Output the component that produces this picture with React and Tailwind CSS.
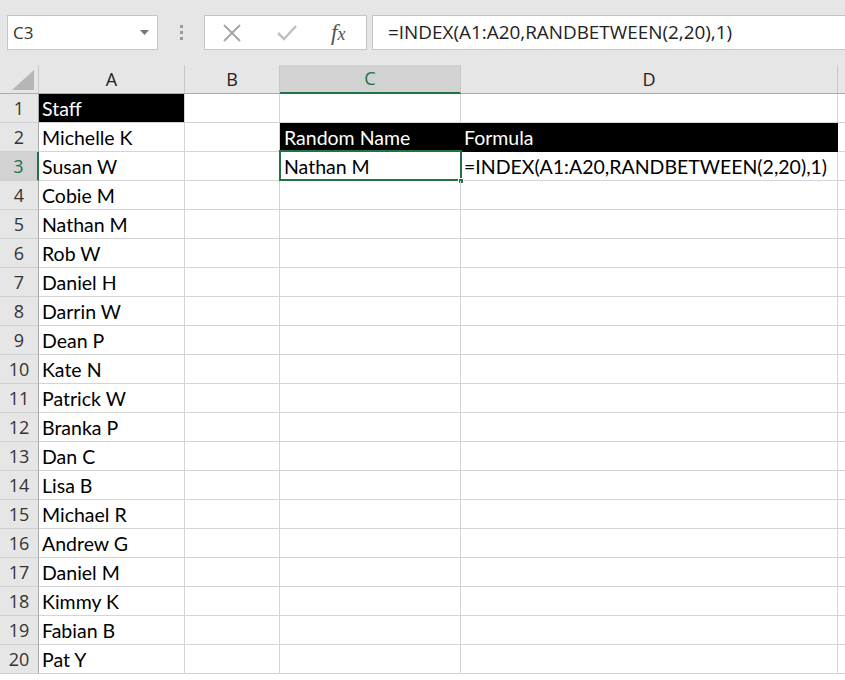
import React from "react";

const staff = [
  "Staff","Michelle K","Susan W","Cobie M","Nathan M","Rob W","Daniel H","Darrin W","Dean P","Kate N",
  "Patrick W","Branka P","Dan C","Lisa B","Michael R","Andrew G","Daniel M","Kimmy K","Fabian B","Pat Y",
];

const cellFont = { fontFamily: "Lato, 'Open Sans', sans-serif" };

function Row({ n }) {
  const name = staff[n - 1];
  const sel = n === 3;
  return (
    <div className="flex h-[29px]">
      <div
        className={
          "w-[39px] shrink-0 flex items-center justify-center text-[18px] border-b border-[#d0d0d0] " +
          (sel
            ? "bg-[#d2d2d2] text-[#217346] border-r-2 border-r-[#217346]"
            : "bg-[#e6e6e6] text-[#333] border-r border-r-[#a9a9a9]")
        }
        style={{ fontFamily: "'Open Sans', 'Noto Sans', sans-serif" }}
      >
        {n}
      </div>
      <div
        className={
          "w-[146px] shrink-0 border-r border-b border-[#d4d4d4] flex items-center pl-[3px] pt-[2px] text-[19.5px] " +
          (n === 1 ? "bg-black text-white" : "text-black")
        }
        style={cellFont}
      >
        {name}
      </div>
      <div className="w-[95px] shrink-0 border-r border-b border-[#d4d4d4]" />
      <div
        className={
          "w-[181px] shrink-0 border-r border-b border-[#d4d4d4] flex items-center pl-[4px] pt-[2px] text-[19.5px] relative " +
          (n === 2 ? "bg-black text-white border-black" : "text-black")
        }
        style={cellFont}
      >
        {n === 2 ? "Random Name" : n === 3 ? "Nathan M" : ""}
        {sel && (
          <>
            <div className="absolute left-[-1px] top-[-2px] w-[183px] h-[31px] border-2 border-[#217346] pointer-events-none" />
            <div className="absolute right-[-4px] bottom-[-4px] w-[6px] h-[6px] bg-[#217346] border border-white" />
          </>
        )}
      </div>
      <div
        className={
          "w-[377px] shrink-0 border-r border-b border-[#d4d4d4] flex items-center pl-[3px] pt-[2px] text-[19.5px] whitespace-nowrap " +
          (n === 2 ? "bg-black text-white border-black" : "text-black")
        }
        style={cellFont}
      >
        {n === 2 ? "Formula" : n === 3 ? "=INDEX(A1:A20,RANDBETWEEN(2,20),1)" : ""}
      </div>
      <div className="flex-1 border-b border-[#d4d4d4]" />
    </div>
  );
}

export default function App() {
  const rows = Array.from({ length: 20 }, (_, i) => i + 1);
  return (
    <div className="w-[845px] h-[680px] overflow-hidden bg-white">
      {/* Formula bar area */}
      <div className="h-[65px] bg-[#e6e6e6] flex items-start pt-[15px]">
        <div className="ml-[7px] w-[151px] h-[35px] bg-white border border-[#c6c6c6] flex items-center justify-between pl-[5px] pr-[8px]">
          <span className="text-[17px] text-[#333]" style={{ fontFamily: "'Open Sans', sans-serif" }}>C3</span>
          <svg width="9" height="5" viewBox="0 0 9 5"><path d="M0 0h9L4.5 5z" fill="#777" /></svg>
        </div>
        <div className="w-[46px] h-[35px] flex flex-col items-center justify-center gap-[3px]">
          <span className="w-[3px] h-[3px] bg-[#9a9a9a]" />
          <span className="w-[3px] h-[3px] bg-[#9a9a9a]" />
          <span className="w-[3px] h-[3px] bg-[#9a9a9a]" />
        </div>
        <div className="w-[163px] h-[35px] bg-white border border-[#c6c6c6] flex items-center">
          <svg className="ml-[18px]" width="18" height="18" viewBox="0 0 18 18">
            <path d="M1 1L17 17M17 1L1 17" stroke="#a6a6a6" strokeWidth="2" />
          </svg>
          <svg className="ml-[36px]" width="20" height="16" viewBox="0 0 20 16">
            <path d="M1 8L7 14L19 1" stroke="#c0c0c0" strokeWidth="2.5" fill="none" />
          </svg>
          <span
            className="ml-[34px] text-[23px] italic text-[#555] leading-none"
            style={{ fontFamily: "'Liberation Serif', 'DejaVu Serif', serif" }}
          >
            f<span className="text-[18px]">x</span>
          </span>
        </div>
        <div className="ml-[5px] flex-1 h-[35px] bg-white border border-[#c6c6c6] border-r-0 flex items-center pl-[15px]">
          <span className="text-[18.9px] text-[#222] whitespace-nowrap" style={{ fontFamily: "'Open Sans', sans-serif" }}>
            =INDEX(A1:A20,RANDBETWEEN(2,20),1)
          </span>
        </div>
      </div>

      {/* Column headers */}
      <div className="flex h-[29px] bg-[#e6e6e6] border-b border-[#ababab]" style={{ fontFamily: "'Open Sans', sans-serif" }}>
        <div className="w-[39px] shrink-0 border-r border-[#c8c8c8] relative">
          <svg className="absolute right-[4px] bottom-[3px]" width="22" height="20" viewBox="0 0 22 20">
            <path d="M22 0V20H0z" fill="#b6b6b6" />
          </svg>
        </div>
        <div className="w-[146px] shrink-0 border-r border-[#c8c8c8] flex items-center justify-center text-[18px] text-[#222]">A</div>
        <div className="w-[95px] shrink-0 border-r border-[#c8c8c8] flex items-center justify-center text-[18px] text-[#222]">B</div>
        <div className="w-[181px] shrink-0 border-r border-[#c8c8c8] bg-[#d2d2d2] border-b-2 border-b-[#217346] mb-[-1px] flex items-center justify-center text-[18px] text-[#217346]">C</div>
        <div className="w-[377px] shrink-0 border-r border-[#c8c8c8] flex items-center justify-center text-[18px] text-[#222]">D</div>
        <div className="flex-1" />
      </div>

      {rows.map((n) => (
        <Row key={n} n={n} />
      ))}
    </div>
  );
}
